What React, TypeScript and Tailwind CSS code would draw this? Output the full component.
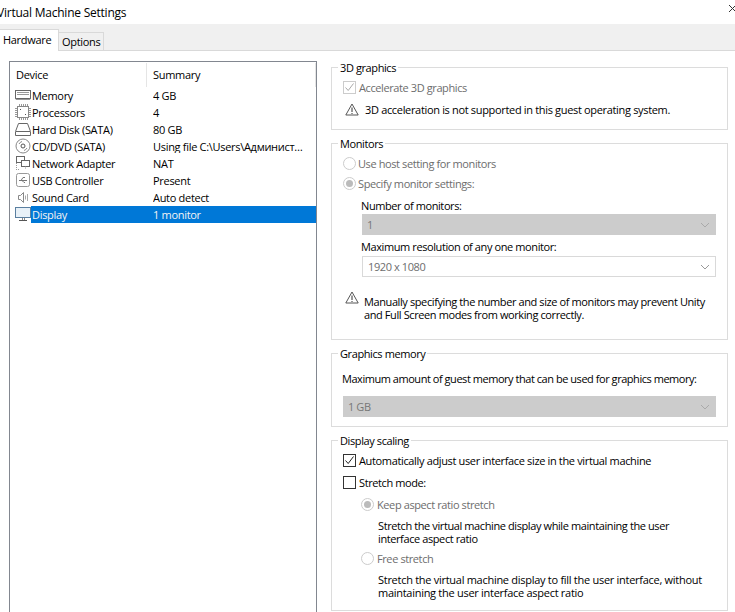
import React from "react";

const Warn = () => (
  <svg width="14" height="13" viewBox="0 0 14 13" className="shrink-0">
    <path d="M7 1 L13.2 12 H0.8 Z" fill="none" stroke="#555" strokeWidth="1" />
    <path d="M7 4.5 V9 M7 10 V11" stroke="#333" strokeWidth="1" />
  </svg>
);

const Check = ({ disabled }: { disabled?: boolean }) => (
  <div className={`w-[13px] h-[13px] border shrink-0 flex items-center justify-center ${disabled ? "border-[#cccccc]" : "border-[#333333]"}`}>
    {disabled !== undefined && (
      <svg width="11" height="11" viewBox="0 0 11 11">
        <path d="M1.5 5.5 L4.2 8.5 L9.5 1.5" fill="none" stroke={disabled ? "#aaaaaa" : "#222222"} strokeWidth="1" />
      </svg>
    )}
  </div>
);

const Radio = ({ on }: { on?: boolean }) => (
  <div className="w-[13px] h-[13px] rounded-full border border-[#cccccc] shrink-0 flex items-center justify-center">
    {on && <div className="w-[7px] h-[7px] rounded-full bg-[#bbbbbb]" />}
  </div>
);

const Select = ({ value, disabled }: { value: string; disabled?: boolean }) => (
  <div className={`h-[21px] flex items-center justify-between pr-[5px] border ${disabled ? "pl-[4px] bg-[#cccccc] border-[#cccccc] text-[#777777]" : "pl-[5px] bg-white border-[#d9d9d9] text-[#6d6d6d]"}`}>
    <span>{value}</span>
    <svg width="10" height="6" viewBox="0 0 10 6">
      <path d="M1 1 L5 5 L9 1" fill="none" stroke={disabled ? "#a9a9a9" : "#999999"} strokeWidth="1" />
    </svg>
  </div>
);

const Group = ({ title, h, children }: { title: string; h: string; children: React.ReactNode }) => (
  <div className={`relative border border-[#dcdcdc] ${h}`}>
    <span className="absolute left-[6px] top-[-8px] bg-white px-[2px] leading-[16px]">{title}</span>
    {children}
  </div>
);

const s = "#666666";
const icons: Record<string, React.ReactNode> = {
  Memory: (
    <g fill="none" stroke={s}>
      <rect x="0.5" y="3.5" width="15" height="8" />
      <path d="M2 5.5H14 M2 7.5H14" stroke="#999999" />
      <path d="M1 11.5V12.5H15V11.5" stroke="#999999" />
    </g>
  ),
  Processors: (
    <g fill="none">
      <rect x="2.5" y="2.5" width="11" height="11" stroke="#888888" />
      <path d="M4.5 0V2 M6.5 0V2 M8.5 0V2 M10.5 0V2 M12.5 0V2 M4.5 14V16 M6.5 14V16 M8.5 14V16 M10.5 14V16 M12.5 14V16 M0 4.5H2 M0 6.5H2 M0 8.5H2 M0 10.5H2 M0 12.5H2 M14 4.5H16 M14 6.5H16 M14 8.5H16 M14 10.5H16 M14 12.5H16" stroke="#999999" />
      <path d="M5 5.5H6 M10 10.5H11" stroke="#555555" />
    </g>
  ),
  "Hard Disk (SATA)": (
    <g fill="none" stroke={s}>
      <path d="M3.5 2.5H12.5L15.5 10.5V14.5H0.5V10.5Z" />
      <path d="M1 10.5H15" />
    </g>
  ),
  "CD/DVD (SATA)": (
    <g fill="none" stroke="#888888">
      <circle cx="8" cy="8" r="7" />
      <circle cx="8" cy="8" r="2" stroke="#555555" />
      <path d="M4 6 A5 5 0 0 1 7 3.5 M12 10 A5 5 0 0 1 9 12.5" />
    </g>
  ),
  "Network Adapter": (
    <g fill="none" stroke={s}>
      <rect x="1.5" y="1.5" width="8" height="6" />
      <rect x="6.5" y="5.5" width="8" height="6" fill="#ffffff" />
      <path d="M10.5 11.5V14 M1 14.5H5" stroke="#999999" strokeDasharray="1 1" />
      <path d="M1.5 8V14" stroke="#999999" strokeDasharray="1 1" />
    </g>
  ),
  "USB Controller": (
    <g fill="none" stroke="#999999">
      <rect x="1.5" y="1.5" width="13" height="13" rx="2" />
      <path d="M4 8.5H12 M6 8.5L8 5.5H10 M7 8.5L9 10.5H10" stroke="#777777" />
    </g>
  ),
  "Sound Card": (
    <g fill="none" stroke="#888888">
      <path d="M3.5 6.5V10.5H5.5L8.5 13.5V3.5L5.5 6.5Z" />
      <path d="M10.5 6.5V10.5 M12.5 5V12" stroke="#aaaaaa" />
    </g>
  ),
  Display: (
    <g fill="none">
      <rect x="0.5" y="1.5" width="15" height="10" stroke="#5a7fa0" fill="#e8f1f8" />
      <path d="M4 14.5H12" stroke="#555555" />
      <path d="M7.5 12V14 M9.5 12V14" stroke="#888888" />
    </g>
  ),
};

const rows: [string, string][] = [
  ["Memory", "4 GB"],
  ["Processors", "4"],
  ["Hard Disk (SATA)", "80 GB"],
  ["CD/DVD (SATA)", "Using file C:\\Users\\Администратор"],
  ["Network Adapter", "NAT"],
  ["USB Controller", "Present"],
  ["Sound Card", "Auto detect"],
  ["Display", "1 monitor"],
];

export default function App() {
  return (
    <div className="relative w-[735px] h-[612px] overflow-hidden bg-white text-black flex flex-col font-['Open_Sans',sans-serif] text-[11px] leading-[13px] tracking-[-0.4px]">
      <div className="h-[24px] shrink-0 flex items-center justify-between">
        <span className="-ml-[3px] text-[12px] tracking-[-0.23px]">Virtual Machine Settings</span>
        <svg width="9" height="9" viewBox="0 0 9 9" className="mr-[-2px] mb-[8px]">
          <path d="M1 1L8 8M8 1L1 8" stroke="#333333" strokeWidth="1" />
        </svg>
      </div>
      <div className="h-[27px] shrink-0 bg-[#f0f0f0] border-b border-[#d9d9d9] flex items-end tracking-[-0.3px]">
        <div className="h-[22px] w-[59px] mb-[-1px] bg-white border-t border-r border-[#d9d9d9] pl-[3px] pb-[2px] flex items-center">Hardware</div>
        <div className="h-[18px] w-[45px] border-t border-r border-[#d9d9d9] pl-[3px] flex items-center">Options</div>
      </div>
      <div className="flex-1 flex min-h-0 pl-[9px] pt-[10px]">
        <div className="w-[308px] h-[560px] shrink-0 border border-[#828790] pt-px tracking-[-0.3px]">
          <div className="flex h-[24px] items-center relative">
            <span className="pl-[6px] pb-[2px] w-[137px] h-full flex items-center border-r border-[#e5e5e5]">Device</span>
            <span className="pl-[6px] pb-[2px] flex-1 h-full flex items-center border-r border-[#e5e5e5]">Summary</span>
          </div>
          <div>
            {rows.map(([n, v]) => (
              <div key={n} className="flex h-[17px] pl-[5px]">
                <svg width="16" height="16" viewBox="0 0 16 16" className="shrink-0">{icons[n]}</svg>
                <div className={`flex flex-1 items-center pl-px ${n === "Display" ? "bg-[#0078d7] text-[#f4f4f4]" : ""}`}>
                  <span className="w-[121px] shrink-0 whitespace-nowrap">{n}</span>
                  <span className="w-[155px] truncate">{v}</span>
                </div>
              </div>
            ))}
          </div>
        </div>
        <div className="w-[397px] ml-[14px] pt-[6px] flex flex-col gap-[13px]">
          <Group title="3D graphics" h="h-[63px]">
            <div className="pl-[11px] pt-[13px] flex items-center gap-[3px] text-[#6d6d6d] h-[26px]">
              <Check disabled />
              <span>Accelerate 3D graphics</span>
            </div>
            <div className="pl-[13px] mt-[9px] flex items-center gap-[6px]">
              <Warn />
              <span className="tracking-[-0.33px]">3D acceleration is not supported in this guest operating system.</span>
            </div>
          </Group>
          <Group title="Monitors" h="h-[197px]">
            <div className="pl-[11px] pt-[11px] flex flex-col">
              <div className="flex items-center gap-[2px] text-[#6d6d6d] h-[16px]"><Radio /><span>Use host setting for monitors</span></div>
              <div className="flex items-center gap-[2px] text-[#6d6d6d] h-[16px] mt-[4px]"><Radio on /><span>Specify monitor settings:</span></div>
            </div>
            <div className="pl-[29px] pr-[11px] mt-[7px]">
              <div className="leading-[16px]">Number of monitors:</div>
              <div className="mt-0 ml-px"><Select value="1" disabled /></div>
              <div className="leading-[16px] mt-[4px]">Maximum resolution of any one monitor:</div>
              <div className="mt-px ml-px"><Select value="1920 x 1080" /></div>
            </div>
            <div className="pl-[13px] pr-[6px] mt-[14px] flex gap-[5px]">
              <Warn />
              <div className="pt-[4px]">
                Manually specifying the number and size of monitors may prevent Unity<br />
                and Full Screen modes from working correctly.
              </div>
            </div>
          </Group>
          <Group title="Graphics memory" h="h-[74px]">
            <div className="pl-[10px] pr-[11px] pt-[17px]">
              <div className="leading-[16px] tracking-[-0.46px]">Maximum amount of guest memory that can be used for graphics memory:</div>
              <div className="mt-[9px] ml-px"><Select value="1 GB" disabled /></div>
            </div>
          </Group>
          <Group title="Display scaling" h="h-[171px]">
            <div className="pl-[11px] pt-[11px]">
              <div className="flex items-center gap-[3px] h-[16px]"><Check disabled={false} /><span className="tracking-[-0.35px]">Automatically adjust user interface size in the virtual machine</span></div>
              <div className="flex items-center gap-[3px] h-[16px] mt-[6px]"><Check /><span>Stretch mode:</span></div>
            </div>
            <div className="pl-[29px] pr-[11px]">
              <div className="flex items-center gap-[3px] text-[#6d6d6d] h-[16px] mt-[6px]"><Radio on /><span>Keep aspect ratio stretch</span></div>
              <div className="ml-[17px] mt-[7px]">
                Stretch the virtual machine display while maintaining the user<br />interface aspect ratio
              </div>
              <div className="flex items-center gap-[3px] text-[#6d6d6d] h-[16px] mt-[5px]"><Radio /><span>Free stretch</span></div>
              <div className="ml-[17px] mt-[7px] tracking-[-0.28px]">
                Stretch the virtual machine display to fill the user interface, without<br />maintaining the user interface aspect ratio
              </div>
            </div>
          </Group>
        </div>
      </div>
    </div>
  );
}
